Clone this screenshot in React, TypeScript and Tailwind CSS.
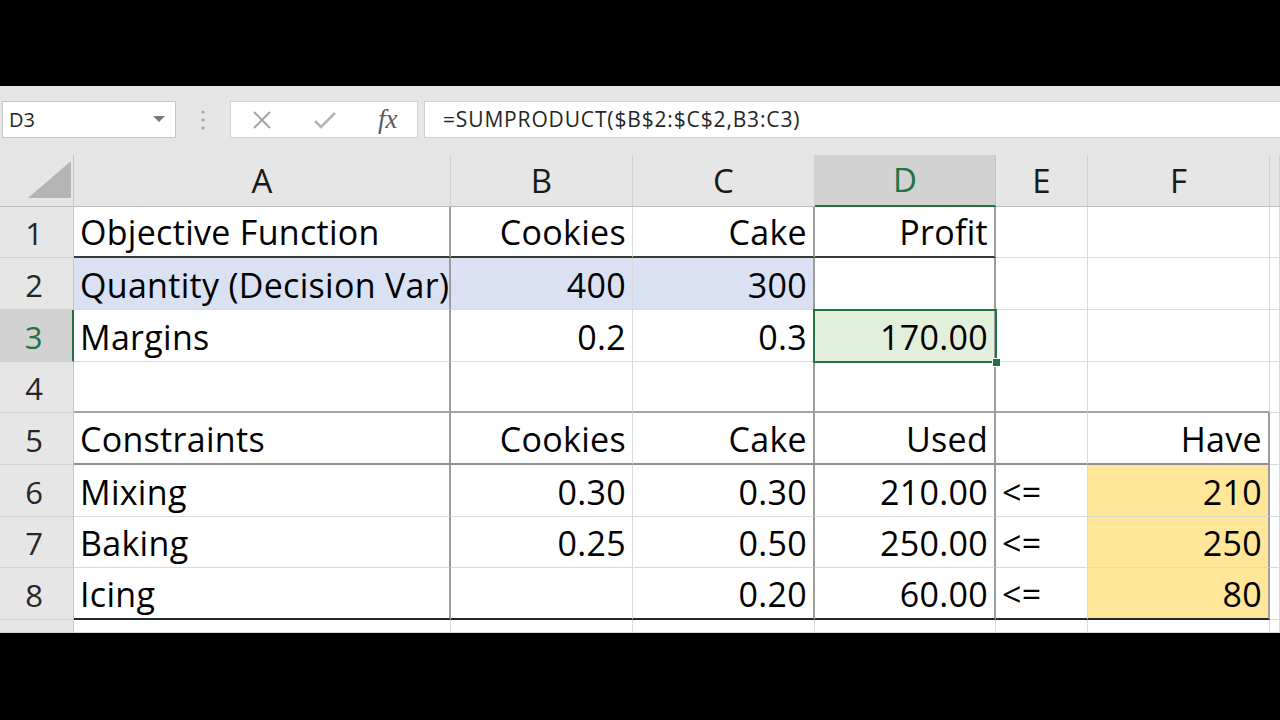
import React from "react";

type C = { t?: string; r?: boolean; bg?: string };

const W = ["w-[377px]", "w-[182px]", "w-[182px]", "w-[181px]", "w-[92px]", "w-[182px]", "flex-1"];
const H = ["h-[51px]", "h-[52px]", "h-[52px]", "h-[51px]", "h-[52px]", "h-[52px]", "h-[51px]", "h-[52px]", "h-[13px]"];

const LIGHT_R = "border-r border-r-[#dadada]";
const DARK_R = "border-r-2 border-r-[#9c9c9c]";
const LIGHT_B = "border-b border-b-[#dadada]";

function rightBorder(row: number, col: number) {
  if (row >= 8) return LIGHT_R;
  if (col === 0 || col === 2 || col === 3) return DARK_R;
  if (col === 5 && row >= 4) return DARK_R;
  return LIGHT_R;
}

function bottomBorder(row: number, col: number) {
  if (col === 6) return LIGHT_B;
  if (row === 0) return col <= 3 ? "border-b-2 border-b-[#3a3a3a]" : LIGHT_B;
  if (row === 3) return "border-b-2 border-b-[#a4a4a4]";
  if (row === 4) return "border-b-2 border-b-[#8e8e8e]";
  if (row === 7) return "border-b-2 border-b-[#262626]";
  return LIGHT_B;
}

const data: C[][] = [
  [{ t: "Objective Function" }, { t: "Cookies", r: true }, { t: "Cake", r: true }, { t: "Profit", r: true }, {}, {}, {}],
  [
    { t: "Quantity (Decision Var)", bg: "bg-[#d9e1f2]" },
    { t: "400", r: true, bg: "bg-[#d9e1f2]" },
    { t: "300", r: true, bg: "bg-[#d9e1f2]" },
    {},
    {},
    {},
    {},
  ],
  [{ t: "Margins" }, { t: "0.2", r: true }, { t: "0.3", r: true }, { t: "170.00", r: true, bg: "bg-[#e2efda]" }, {}, {}, {}],
  [{}, {}, {}, {}, {}, {}, {}],
  [{ t: "Constraints" }, { t: "Cookies", r: true }, { t: "Cake", r: true }, { t: "Used", r: true }, {}, { t: "Have", r: true }, {}],
  [{ t: "Mixing" }, { t: "0.30", r: true }, { t: "0.30", r: true }, { t: "210.00", r: true }, { t: "<=" }, { t: "210", r: true, bg: "bg-[#ffe699]" }, {}],
  [{ t: "Baking" }, { t: "0.25", r: true }, { t: "0.50", r: true }, { t: "250.00", r: true }, { t: "<=" }, { t: "250", r: true, bg: "bg-[#ffe699]" }, {}],
  [{ t: "Icing" }, {}, { t: "0.20", r: true }, { t: "60.00", r: true }, { t: "<=" }, { t: "80", r: true, bg: "bg-[#ffe699]" }, {}],
  [{}, {}, {}, {}, {}, {}, {}],
];

const cellFont = { fontFamily: "'Open Sans', 'Noto Sans', sans-serif" };
const uiFont = { fontFamily: "'Open Sans', 'Noto Sans', sans-serif" };

export default function App() {
  return (
    <div className="w-[1280px] h-[720px] bg-black overflow-hidden flex flex-col">
      <div className="h-[86px] shrink-0 bg-black" />
      {/* Formula bar */}
      <div className="h-[69px] shrink-0 bg-[#e6e6e6] flex items-start pt-[15px]" style={uiFont}>
        <div className="ml-[2px] w-[174px] h-[37px] bg-white border border-[#c6c6c6] flex items-center justify-between pl-[6px] pr-[10px]">
          <span className="text-[20px] text-[#262626] leading-none">D3</span>
          <svg width="12" height="7" viewBox="0 0 12 7">
            <polygon points="0,0 12,0 6,6" fill="#7a7a7a" />
          </svg>
        </div>
        <div className="w-[54px] h-[37px] flex items-center justify-center">
          <svg width="4" height="20" viewBox="0 0 4 20">
            <circle cx="2" cy="2" r="1.6" fill="#a6a6a6" />
            <circle cx="2" cy="10" r="1.6" fill="#a6a6a6" />
            <circle cx="2" cy="18" r="1.6" fill="#a6a6a6" />
          </svg>
        </div>
        <div className="w-[188px] h-[37px] bg-white border border-[#d2d2d2] flex items-center">
          <svg className="ml-[21px]" width="20" height="20" viewBox="0 0 20 20">
            <path d="M2 2 L18 18 M18 2 L2 18" stroke="#a6a6a6" strokeWidth="2" fill="none" />
          </svg>
          <svg className="ml-[41px]" width="24" height="20" viewBox="0 0 24 20">
            <path d="M2 11 L8 17 L22 3" stroke="#b3b3b3" strokeWidth="2.6" fill="none" />
          </svg>
          <span
            className="ml-[41px] text-[27px] leading-none italic text-[#5a5a5a]"
            style={{ fontFamily: "'Liberation Serif', 'DejaVu Serif', serif" }}
          >
            fx
          </span>
        </div>
        <div className="ml-[6px] flex-1 h-[37px] bg-white border border-r-0 border-[#d2d2d2] flex items-center pl-[18px]">
          <span className="text-[21px] tracking-[0.85px] text-[#262626] leading-none">=SUMPRODUCT($B$2:$C$2,B3:C3)</span>
        </div>
      </div>

      {/* Grid */}
      <div className="relative bg-white shrink-0" style={cellFont}>
        {/* Column headers */}
        <div className="flex h-[52px] bg-[#e6e6e6]">
          <div className="w-[74px] shrink-0 border-r border-r-[#c4c4c4] border-b border-b-[#bdbdbd] relative">
            <svg className="absolute left-[28px] top-[6px]" width="44" height="38" viewBox="0 0 44 38">
              <polygon points="43,0 43,37 0,37" fill="#b4b4b4" />
            </svg>
          </div>
          {["A", "B", "C", "D", "E", "F", ""].map((l, i) => (
            <div
              key={i}
              className={
                W[i] +
                " shrink-0 flex items-center justify-center text-[33px] leading-none pb-[1px] " +
                (i === 3
                  ? "bg-[#d2d2d2] text-[#217346] border-b-2 border-b-[#217346] border-r border-r-[#c4c4c4]"
                  : "text-[#1a1a1a] border-b border-b-[#bdbdbd] border-r border-r-[#d0d0d0]")
              }
            >
              {l}
            </div>
          ))}
        </div>

        {data.map((row, ri) => (
          <div key={ri} className={"flex " + H[ri]}>
            <div
              className={
                "w-[74px] shrink-0 flex items-end justify-center pr-[5px] text-[31px] leading-none border-b border-b-[#d0d0d0] " +
                (ri === 8 ? "pb-0 " : "pb-[8px] ") +
                (ri === 2
                  ? "bg-[#d2d2d2] text-[#217346] border-r-2 border-r-[#217346]"
                  : "bg-[#e6e6e6] text-[#262626] border-r border-r-[#c4c4c4]")
              }
            >
              {ri < 8 ? String(ri + 1) : ""}
            </div>
            {row.map((c, ci) => (
              <div
                key={ci}
                className={
                  W[ci] +
                  " shrink-0 flex items-end whitespace-nowrap overflow-visible text-[34px] tracking-[0.3px] leading-none pb-[7px] text-black " +
                  (c.r ? "justify-end pr-[6px] " : "justify-start pl-[6px] ") +
                  (c.bg ? c.bg + " " : "bg-white ") +
                  rightBorder(ri, ci) +
                  " " +
                  bottomBorder(ri, ci)
                }
              >
                {c.t ?? ""}
              </div>
            ))}
          </div>
        ))}

        {/* Selection D3 */}
        <div className="absolute left-[813px] top-[154px] w-[184px] h-[54px] border-2 border-[#217346] pointer-events-none" />
        <div className="absolute left-[992px] top-[203px] w-[9px] h-[9px] bg-[#217346] border border-white pointer-events-none" />
      </div>
      <div className="flex-1 bg-black" />
    </div>
  );
}
